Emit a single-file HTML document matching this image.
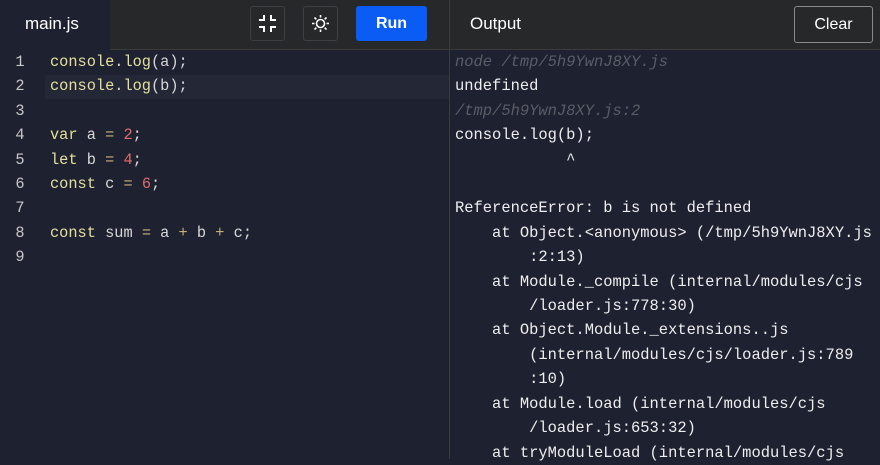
<!DOCTYPE html>
<html><head><style>
*{margin:0;padding:0;box-sizing:border-box}
body{width:880px;height:459px;overflow:hidden;background:#1e2130;font-family:"Liberation Sans",sans-serif;position:relative}
.hdr{position:absolute;left:0;top:0;width:880px;height:50px;background:#272829;border-bottom:1px solid #3a3b3d}
.tab{position:absolute;left:0;top:0;width:110px;height:50px;background:#1e2130;color:#fff;font-size:17px;padding:14px 0 0 25px}
.btn{position:absolute;top:6px;width:35px;height:35px;border:1px solid #3e3f42;border-radius:3px}
.run{position:absolute;left:356px;top:6px;width:71px;height:35px;background:#0a5cf5;border-radius:3px;color:#fff;font-weight:bold;font-size:16px;text-align:center;line-height:35px}
.out{position:absolute;left:470px;top:14px;color:#fff;font-size:17px}
.clear{position:absolute;left:794px;top:6px;width:79px;height:37px;border:1px solid #8a8a8a;border-radius:3px;color:#fff;font-size:16px;text-align:center;line-height:35px}
.div{position:absolute;left:449px;top:0;width:1px;height:459px;background:#3a3b3d}
.code{position:absolute;top:50px;font-family:"Liberation Mono",monospace;font-size:15.3px;line-height:24.4px}
.ln{left:0;width:40px;text-align:center;color:#c8c8c8;top:50px}
.hl{position:absolute;left:45px;top:75px;width:404px;height:24px;background:#232736}
.ed{left:50px;color:#d8d8d8;white-space:pre}
.y{color:#e6dfa0}.r{color:#e06c6c}.o{color:#c9b07a}
.op{left:455px;color:#eee;white-space:pre;font-size:15.45px}
.g{color:#5a5d66;font-style:italic}
</style></head><body>
<div class="hdr"></div>
<div class="tab">main.js</div>
<div class="btn" style="left:250px"><svg width="33" height="33" viewBox="0 0 33 33" stroke="#fff" stroke-width="2" fill="none"><path d="M13 8v5H8M20 8v5h5M13 25v-5H8M20 25v-5h5"/></svg></div>
<div class="btn" style="left:303px"><svg width="33" height="33" viewBox="0 0 33 33" stroke="#fff" stroke-width="1.6" fill="none"><circle cx="16.5" cy="16.5" r="4"/><path d="M16.5 8v2.5M16.5 22.5V25M8 16.5h2.5M22.5 16.5H25M10.5 10.5l1.8 1.8M20.7 20.7l1.8 1.8M10.5 22.5l1.8-1.8M20.7 12.3l1.8-1.8"/></svg></div>
<div class="run">Run</div>
<div class="out">Output</div>
<div class="clear">Clear</div>
<div class="div"></div>
<div class="hl"></div>
<div class="code ln">1<br>2<br>3<br>4<br>5<br>6<br>7<br>8<br>9</div>
<div class="code ed"><span class="y">console</span>.<span class="y">log</span>(a);
<span class="y">console</span>.<span class="y">log</span>(b);

<span class="y">var</span> a <span class="o">=</span> <span class="r">2</span>;
<span class="y">let</span> b <span class="o">=</span> <span class="r">4</span>;
<span class="y">const</span> c <span class="o">=</span> <span class="r">6</span>;

<span class="y">const</span> sum <span class="o">=</span> a <span class="o">+</span> b <span class="o">+</span> c;
</div>
<div class="code op"><span class="g">node /tmp/5h9YwnJ8XY.js</span>
undefined
<span class="g">/tmp/5h9YwnJ8XY.js:2</span>
console.log(b);
            ^

ReferenceError: b is not defined
    at Object.&lt;anonymous&gt; (/tmp/5h9YwnJ8XY.js
        :2:13)
    at Module._compile (internal/modules/cjs
        /loader.js:778:30)
    at Object.Module._extensions..js
        (internal/modules/cjs/loader.js:789
        :10)
    at Module.load (internal/modules/cjs
        /loader.js:653:32)
    at tryModuleLoad (internal/modules/cjs</div>
</body></html>
